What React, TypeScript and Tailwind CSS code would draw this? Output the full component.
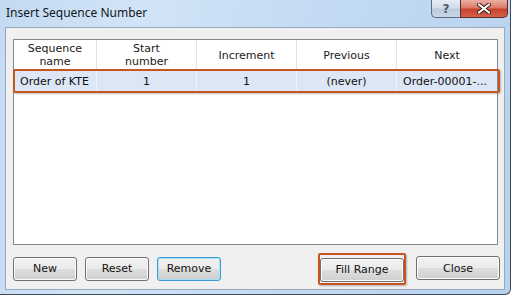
import React from "react";

const headers = [
  { w: "w-[83px]", lines: ["Sequence", "name"] },
  { w: "w-[100px]", lines: ["Start", "number"] },
  { w: "w-[100px]", lines: ["Increment"] },
  { w: "w-[100px]", lines: ["Previous"] },
  { w: "w-[100px]", lines: ["Next"] },
];

const row = [
  { w: "w-[83px]", text: "Order of KTE", align: "justify-start pl-[6px]" },
  { w: "w-[100px]", text: "1", align: "justify-center" },
  { w: "w-[100px]", text: "1", align: "justify-center" },
  { w: "w-[100px]", text: "(never)", align: "justify-center" },
  { w: "w-[100px]", text: "Order-00001-...", align: "justify-start pl-[6px]" },
];

function WinButton({
  label,
  width = "w-[64px]",
  focused = false,
}: {
  label: string;
  width?: string;
  focused?: boolean;
}) {
  return (
    <button
      className={`${width} h-[24px] rounded-[3px] border text-[11px] leading-none text-[#111] bg-[linear-gradient(#f2f2f2_0%,#ebebeb_48%,#dddddd_52%,#cfcfcf_100%)] ${
        focused
          ? "border-[#3c9ad6] shadow-[inset_0_0_0_1px_#a8e2f8]"
          : "border-[#707070] shadow-[inset_0_0_0_1px_#fcfcfc]"
      }`}
    >
      {label}
    </button>
  );
}

function TitleBar() {
  return (
    <div className="h-[27px] flex items-start shrink-0">
      <div className="pl-[6px] pt-[5px] text-[12px] leading-[16px] text-[#101820] font-['Noto_Sans',sans-serif]">
        Insert Sequence Number
      </div>
      <div className="ml-auto mr-[2px] flex">
        <div className="w-[29px] h-[18px] flex items-center justify-center border border-t-0 border-r-0 border-[#5d6c82] rounded-bl-[5px] bg-[linear-gradient(#e6edf5_0%,#d3dde9_45%,#bccbdd_55%,#c9d6e6_100%)]">
          <span className="text-[12px] leading-none font-bold text-[#4a586c] font-['DejaVu_Sans',sans-serif]">
            ?
          </span>
        </div>
        <div className="w-[48px] h-[18px] flex items-center justify-center border border-t-0 border-[#5a2d26] rounded-br-[5px] bg-[linear-gradient(#eab0a4_0%,#dc7b69_45%,#c6422d_55%,#d5604b_100%)]">
          <svg width="14" height="11" viewBox="0 0 14 11">
            <path d="M2 1.5 L12 9.5 M12 1.5 L2 9.5" stroke="#3a1a14" strokeWidth="4" strokeLinecap="round" />
            <path d="M2 1.5 L12 9.5 M12 1.5 L2 9.5" stroke="#ffffff" strokeWidth="2.2" strokeLinecap="round" />
          </svg>
        </div>
      </div>
    </div>
  );
}

export default function App() {
  return (
    <div className="w-[514px] h-[297px] bg-white overflow-hidden font-['DejaVu_Sans',sans-serif]">
      <div className="w-[511px] h-[295px] flex flex-col border-r border-b border-[#3f4a5a] rounded-br-[6px] bg-[linear-gradient(100deg,#c3daf2_0%,#d2e4f7_25%,#c4dbf3_55%,#b8d2ee_100%)]">
        <TitleBar />
        <div className="ml-[5px] w-[500px] h-[263px] border border-[#98a9bf] bg-[#f0f0f0] pl-[7px] pr-[4px] pt-[11px] flex flex-col">
          <div className="relative w-[485px] h-[206px] border border-[#828790] bg-white">
            <div className="flex h-[30px]">
              {headers.map((h, i) => (
                <div
                  key={i}
                  className={`${h.w} flex flex-col items-center justify-center text-[11px] leading-[13px] text-[#1a1a1a] ${
                    i < headers.length - 1 ? "border-r border-[#e3e3e3]" : ""
                  }`}
                >
                  {h.lines.map((l) => (
                    <span key={l}>{l}</span>
                  ))}
                </div>
              ))}
            </div>
            <div className="flex h-[22px] bg-[#dce6f4]">
              {row.map((c, i) => (
                <div
                  key={i}
                  className={`${c.w} flex items-center ${c.align} text-[11px] leading-none text-[#111] whitespace-nowrap overflow-hidden ${
                    i < row.length - 1 ? "border-r border-[#eef2f8]" : ""
                  }`}
                >
                  {c.text}
                </div>
              ))}
            </div>
            <div className="absolute -left-[1px] top-[29px] w-[487px] h-[24px] border-2 border-[#c6561f] rounded-[2px] shadow-[1px_1px_2px_rgba(0,0,0,0.25)]" />
          </div>
          <div className="mt-[11px] flex items-center">
            <div className="flex gap-[8px]">
              <WinButton label="New" />
              <WinButton label="Reset" />
              <WinButton label="Remove" focused />
            </div>
            <div className="ml-auto flex gap-[12px]">
              <div className="relative">
                <WinButton label="Fill Range" width="w-[84px]" />
                <div className="absolute -left-[2px] -top-[3px] -right-[2px] -bottom-[3px] border-2 border-[#c6561f] rounded-[2px] shadow-[1px_1px_2px_rgba(0,0,0,0.25)]" />
              </div>
              <WinButton label="Close" width="w-[84px]" />
            </div>
          </div>
        </div>
      </div>
    </div>
  );
}
